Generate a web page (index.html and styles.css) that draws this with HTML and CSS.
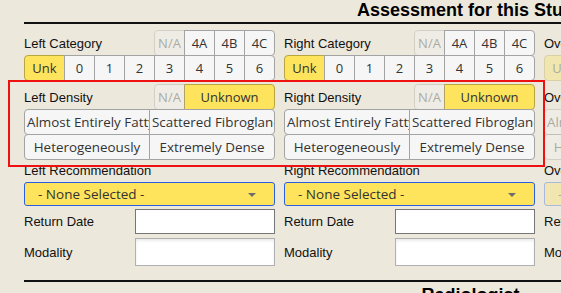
FILE: index.html
```html
<!DOCTYPE html>
<html>
<head>
<meta charset="utf-8">
<link rel="stylesheet" href="styles.css">
</head>
<body>
<div class="page">
  <section class="section">
    <h2 class="section-title">Assessment for this Study</h2>
    <div class="columns">
      <div class="col">
        <div class="row">
          <span class="label">Left Category</span>
          <div class="group push">
            <button class="btn disabled">N/A</button><button class="btn">4A</button><button class="btn">4B</button><button class="btn">4C</button>
          </div>
        </div>
        <div class="group joined">
          <button class="btn wide active">Unk</button><button class="btn">0</button><button class="btn">1</button><button class="btn">2</button><button class="btn">3</button><button class="btn">4</button><button class="btn">5</button><button class="btn">6</button>
        </div>
        <div class="row density">
          <span class="label">Left Density</span>
          <div class="group push">
            <button class="btn disabled">N/A</button><button class="btn unknown active">Unknown</button>
          </div>
        </div>
        <div class="group joined">
          <button class="btn half">Almost Entirely Fatty</button><button class="btn half">Scattered Fibroglandular</button>
        </div>
        <div class="group joined">
          <button class="btn half">Heterogeneously</button><button class="btn half">Extremely Dense</button>
        </div>
        <div class="label rec-label">Left Recommendation</div>
        <div class="select"><span class="select-text">- None Selected -</span><span class="arrow"></span></div>
        <div class="row field date-row">
          <span class="label">Return Date</span>
          <input class="input date" type="text">
        </div>
        <div class="row field mod-row">
          <span class="label">Modality</span>
          <input class="input modality" type="text">
        </div>
      </div>

      <div class="col">
        <div class="row">
          <span class="label">Right Category</span>
          <div class="group push">
            <button class="btn disabled">N/A</button><button class="btn">4A</button><button class="btn">4B</button><button class="btn">4C</button>
          </div>
        </div>
        <div class="group joined">
          <button class="btn wide active">Unk</button><button class="btn">0</button><button class="btn">1</button><button class="btn">2</button><button class="btn">3</button><button class="btn">4</button><button class="btn">5</button><button class="btn">6</button>
        </div>
        <div class="row density">
          <span class="label">Right Density</span>
          <div class="group push">
            <button class="btn disabled">N/A</button><button class="btn unknown active">Unknown</button>
          </div>
        </div>
        <div class="group joined">
          <button class="btn half">Almost Entirely Fatty</button><button class="btn half">Scattered Fibroglandular</button>
        </div>
        <div class="group joined">
          <button class="btn half">Heterogeneously</button><button class="btn half">Extremely Dense</button>
        </div>
        <div class="label rec-label">Right Recommendation</div>
        <div class="select"><span class="select-text">- None Selected -</span><span class="arrow"></span></div>
        <div class="row field date-row">
          <span class="label">Return Date</span>
          <input class="input date" type="text">
        </div>
        <div class="row field mod-row">
          <span class="label">Modality</span>
          <input class="input modality" type="text">
        </div>
      </div>

      <div class="col col-off">
        <div class="row">
          <span class="label">Overall Category</span>
          <div class="group push faded">
            <button class="btn">N/A</button><button class="btn">4A</button><button class="btn">4B</button><button class="btn">4C</button>
          </div>
        </div>
        <div class="group joined faded">
          <button class="btn wide active">Unk</button><button class="btn">0</button><button class="btn">1</button><button class="btn">2</button><button class="btn">3</button><button class="btn">4</button><button class="btn">5</button><button class="btn">6</button>
        </div>
        <div class="row density">
          <span class="label">Overall Density</span>
          <div class="group push faded">
            <button class="btn">N/A</button><button class="btn unknown active">Unknown</button>
          </div>
        </div>
        <div class="group joined faded">
          <button class="btn half">Almost Entirely Fatty</button><button class="btn half">Scattered Fibroglandular</button>
        </div>
        <div class="group joined faded">
          <button class="btn half">Heterogeneously</button><button class="btn half">Extremely Dense</button>
        </div>
        <div class="label rec-label">Overall Recommendation</div>
        <div class="select faded off-select"><span class="select-text">- None Selected -</span><span class="arrow"></span></div>
        <div class="row field date-row">
          <span class="label">Return Date</span>
          <input class="input date" type="text">
        </div>
        <div class="row field mod-row">
          <span class="label">Modality</span>
          <input class="input modality" type="text">
        </div>
      </div>
    </div>
  </section>
  <section class="section second">
    <h2 class="section-title">Radiologist</h2>
  </section>
  <div class="highlight"></div>
</div>
</body>
</html>
```

FILE: styles.css
```css
html, body {
  margin: 0;
  padding: 0;
  overflow: hidden;
  background: #ece8dc;
}
body {
  font-family: "Liberation Sans", Arial, sans-serif;
  color: #111;
}
.page {
  position: relative;
  padding-left: 24px;
  width: 893px;
}
.section-title {
  margin: 0;
  font-family: "Liberation Sans", Arial, sans-serif;
  font-weight: bold;
  font-size: 18px;
  line-height: 20px;
  text-align: center;
  color: #000;
}
.section > .section-title {
  padding-bottom: 2px;
  border-bottom: 2px solid #111;
}
.section.second {
  margin-top: 14px;
  border-top: 2px solid #111;
}
.section.second > .section-title {
  border-bottom: none;
  padding-top: 3px;
}
.columns {
  display: flex;
  gap: 9px;
  margin-top: 6px;
}
.col {
  width: 251px;
  display: flex;
  flex-direction: column;
}
.row {
  display: flex;
  align-items: center;
}
.label {
  font-size: 13px;
  color: #111;
}
.push {
  margin-left: auto;
}
.group {
  display: flex;
}
.joined {
  margin-top: -1px;
}
.btn {
  box-sizing: border-box;
  width: 31px;
  height: 26px;
  margin: 0 0 0 -1px;
  padding: 0 2px;
  border: 1px solid #a3a3a3;
  background: #f6f6f6;
  color: #333;
  font-family: "Open Sans", "Noto Sans", sans-serif;
  font-size: 13px;
  line-height: 22px;
  text-align: center;
  white-space: nowrap;
  overflow: hidden;
  border-radius: 0;
}
.group .btn:first-child {
  margin-left: 0;
  border-top-left-radius: 4px;
  border-bottom-left-radius: 4px;
}
.group .btn:last-child {
  border-top-right-radius: 4px;
  border-bottom-right-radius: 4px;
}
.btn.wide { width: 41px; }
.btn.unknown { width: 91px; }
.btn.half {
  width: 126px;
  text-align: center;
  text-overflow: clip;
  font-size: 13.4px;
}
.btn.active {
  background: #fde45c;
  color: #333;
  border-color: #b9a640;
}
.btn.disabled {
  opacity: 0.35;
}
.density {
  margin-top: 3px;
}
.rec-label {
  line-height: 22px;
  height: 22px;
}
.select {
  position: relative;
  box-sizing: border-box;
  height: 24px;
  border: 1px solid #2b5fe0;
  border-radius: 3px;
  background: #fde45c;
  color: #333;
  font-family: "Open Sans", "Noto Sans", sans-serif;
  font-size: 13.5px;
  line-height: 22px;
  padding-left: 13px;
}
.arrow {
  position: absolute;
  right: 18px;
  top: 10px;
  width: 0;
  height: 0;
  border-left: 4px solid transparent;
  border-right: 4px solid transparent;
  border-top: 4px solid #6d6d6d;
}
.field {
  justify-content: space-between;
}
.date-row { margin-top: 3px; }
.mod-row { margin-top: 4px; }
.input {
  box-sizing: border-box;
  width: 140px;
  margin: 0;
  background: #fff;
  font-size: 13px;
}
.input.date {
  height: 25px;
  border: 1px solid #767676;
}
.input.modality {
  height: 28px;
  border: 1px solid #b0b0b0;
  box-shadow: inset 0 2px 3px rgba(0,0,0,0.08);
}
.faded { opacity: 0.35; }
.highlight {
  position: absolute;
  left: 8px;
  top: 80px;
  width: 537px;
  height: 87px;
  box-sizing: border-box;
  border: 2px solid #ee1111;
  pointer-events: none;
}
```
